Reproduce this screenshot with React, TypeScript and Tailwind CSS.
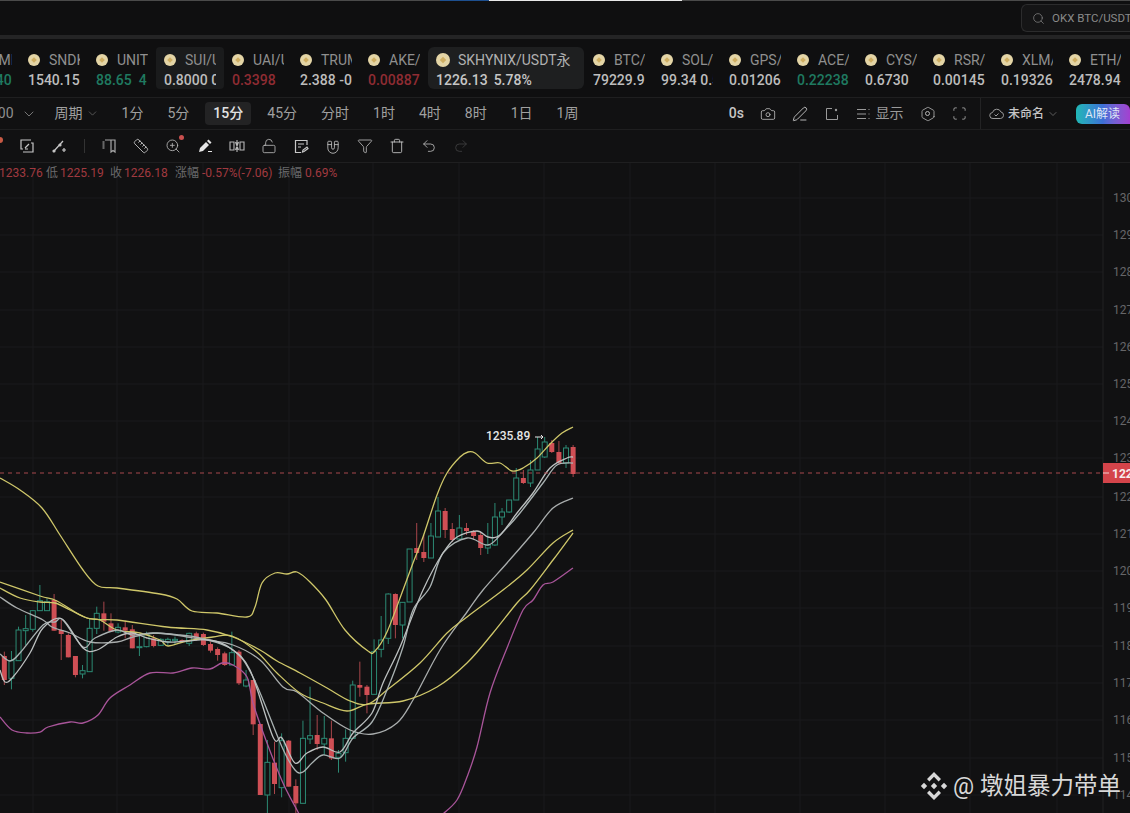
import React from "react";
import { Camera, ChevronDown, Funnel, Hexagon, LockOpen, Magnet, PenLine, Redo2, Ruler, Scan, Search, Trash, Undo2, ZoomIn } from "lucide-react";

const FONT = '[font-family:Roboto,"Noto_Sans_CJK_SC",sans-serif]';

const Coin = ({ size = 12 }: { size?: number }) => (
  <svg width={size} height={size} viewBox="0 0 12 12" className="shrink-0">
    <circle cx="6" cy="6" r="6" fill="#e4d5a6" />
    <path d="M6 3.2 8.8 6 6 8.8 3.2 6Z" fill="#cfae62" />
  </svg>
);

const tickers: { s: string; v: string; c?: string; box?: boolean }[] = [
  { s: "SNDK/USDT", v: "1540.15 3.2%" },
  { s: "UNITY/USDT", v: "88.65\u00a0\u00a04", c: "text-[#1f7a60]" },
  { s: "SUI/USDT", v: "0.8000 0.5%", box: true },
  { s: "UAI/USDT", v: "0.3398", c: "text-[#8f2c33]" },
  { s: "TRUMP/USDT", v: "2.388 -0.4%" },
  { s: "AKE/USDT", v: "0.00887", c: "text-[#8f2c33]" },
];
const tickers2: { s: string; v: string; c?: string }[] = [
  { s: "BTC/USDT", v: "79229.9" },
  { s: "SOL/USDT", v: "99.34 0.5%" },
  { s: "GPS/USDT", v: "0.01206" },
  { s: "ACE/USDT", v: "0.22238", c: "text-[#1f7a60]" },
  { s: "CYS/USDT", v: "0.6730" },
  { s: "RSR/USDT", v: "0.00145" },
  { s: "XLM/USDT", v: "0.19326" },
  { s: "ETH/USDT", v: "2478.94" },
];

const Tick = ({ s, v, c, box }: { s: string; v: string; c?: string; box?: boolean }) => (
  <div className={`w-[68px] h-[42px] shrink-0 px-2 rounded ${box ? "bg-[#1a1b1c]" : ""}`}>
    <div className="w-[52px] overflow-hidden">
      <div className="flex items-center h-[20px] mt-[3px] whitespace-nowrap">
        <Coin />
        <span className="ml-[9px] text-[14px] leading-5 text-[#8f8f8f]">{s}</span>
      </div>
      <div className={`h-[20px] text-[14px] leading-[20px] font-medium whitespace-nowrap ${c ?? "text-[#bdbdbd]"}`}>{v}</div>
    </div>
  </div>
);

const periods = ["1分", "5分", "15分", "45分", "分时", "1时", "4时", "8时", "1日", "1周"];

const IconBox = ({ children, w = "w-[32px]" }: { children: React.ReactNode; w?: string }) => (
  <div className={`${w} h-[24px] flex items-center justify-center shrink-0 text-[#b5b5b5]`}>{children}</div>
);

const s = { size: 16, strokeWidth: 1.3 };

/* z3: [wickTop, bodyTop, bodyBot, wickBot, red] in zoomed units */
const Z: [number, number, number, number, number][] = [
  [245, 258, 330, 345, 1], [243, 272, 325, 358, 0], [170, 180, 272, 272, 0], [135, 176, 182, 225, 0], [120, 122, 178, 185, 0],
  [45, 92, 122, 122, 0], [85, 95, 122, 122, 0], [72, 90, 182, 182, 1], [150, 180, 192, 270, 1], [190, 195, 262, 262, 1],
  [258, 258, 315, 322, 1], [285, 302, 312, 325, 0], [145, 175, 305, 305, 0], [110, 130, 175, 192, 0], [95, 130, 155, 182, 1],
  [130, 160, 185, 185, 1], [160, 172, 186, 190, 0], [152, 172, 182, 205, 1], [165, 178, 235, 235, 1], [195, 230, 232, 258, 0],
  [185, 192, 230, 232, 0], [195, 205, 228, 232, 1], [205, 208, 226, 228, 0], [203, 208, 215, 225, 0], [200, 208, 212, 222, 0],
  [208, 210, 216, 218, 1], [188, 190, 220, 228, 0], [185, 190, 205, 212, 1], [188, 192, 225, 228, 1], [215, 222, 242, 248, 1],
  [232, 237, 255, 272, 1], [245, 250, 285, 288, 1], [185, 248, 285, 285, 0], [240, 245, 340, 345, 1], [300, 330, 348, 352, 0],
  [330, 330, 463, 495, 1], [462, 462, 675, 675, 1], [510, 577, 675, 729, 0], [515, 578, 642, 672, 1], [490, 512, 653, 682, 0],
  [510, 512, 650, 650, 1], [628, 648, 700, 729, 1], [452, 505, 700, 700, 0], [350, 497, 507, 522, 0], [435, 495, 522, 540, 1],
  [438, 505, 522, 555, 0], [452, 505, 565, 570, 1], [540, 550, 562, 608, 0], [478, 505, 548, 575, 0], [332, 345, 505, 505, 0],
  [275, 345, 353, 380, 1], [345, 350, 375, 430, 1], [208, 245, 373, 373, 0], [138, 210, 238, 262, 0], [70, 72, 205, 222, 0],
  [70, 72, 165, 205, 1], [97, 97, 165, 205, 0],
];
const R: [number, number, number, number, number][] = [
  [549, 549, 602, 602, 0], [523, 548, 553, 560, 1], [535, 552, 558, 562, 1], [523, 536, 558, 558, 0], [497, 511, 537, 537, 0],
  [508, 511, 530, 538, 1], [523, 529, 540, 542, 1], [515, 528, 539, 540, 0], [523, 528, 531, 535, 1], [530, 532, 536, 540, 1],
  [532, 535, 548, 555, 1], [523, 545, 548, 554, 0], [503, 517, 545, 546, 0], [508, 512, 517, 525, 0], [500, 500, 512, 513, 0],
  [468, 478, 500, 500, 0], [470, 478, 483, 484, 1], [460, 470, 483, 487, 0], [437, 449, 470, 470, 0], [437, 442, 457, 458, 0],
  [440, 443, 452, 453, 1], [441, 452, 463, 465, 1], [445, 448, 463, 468, 0], [445, 447, 474, 477, 1],
];
const candles = [
  ...Z.map((c) => [570 + c[0] / 3, 570 + c[1] / 3, 570 + c[2] / 3, 570 + c[3] / 3, c[4]]),
  ...R,
];

/* smooth curve through the sampled points */
const curve = (a: number[][]) => {
  let d = `M${a[0][0]} ${a[0][1]}`;
  for (let i = 0; i < a.length - 1; i++) {
    const p0 = a[Math.max(0, i - 1)];
    const p1 = a[i];
    const p2 = a[i + 1];
    const p3 = a[Math.min(a.length - 1, i + 2)];
    const c1x = p1[0] + (p2[0] - p0[0]) / 6;
    const c1y = p1[1] + (p2[1] - p0[1]) / 6;
    const c2x = p2[0] - (p3[0] - p1[0]) / 6;
    const c2y = p2[1] - (p3[1] - p1[1]) / 6;
    d += ` C${c1x.toFixed(1)} ${c1y.toFixed(1)} ${c2x.toFixed(1)} ${c2y.toFixed(1)} ${p2[0]} ${p2[1]}`;
  }
  return d;
};

const upper = [[0,478],[20,490],[42,508],[60,535],[83,570],[98,586],[117,588],[160,594],[177,599],[192,611],[217,613],[247,617],[255,607],[262,583],[275,573],[287,574],[297,572],[310,582],[326,600],[345,630],[368,651],[375,651],[387,632],[403,590],[413,563],[423,537],[437,495],[447,473],[460,457],[468,452],[475,453],[487,463],[500,463],[512,471],[523,468],[537,458],[550,444],[562,433],[573,427]];
const y1 = [[0,582],[40,596],[57,601],[87,618],[117,620],[167,627],[207,630],[233,637],[260,650],[277,661],[300,673],[327,688],[350,701],[368,704],[387,690],[420,663],[447,633],[467,617],[503,590],[527,570],[553,543],[573,530]];
const y2 = [[0,588],[20,598],[40,602],[55,603],[70,610],[87,618],[100,620],[117,630],[140,633],[160,640],[168,646],[187,641],[213,637],[232,636],[257,652],[277,673],[300,693],[323,703],[347,711],[368,704],[403,701],[437,687],[467,663],[493,633],[517,603],[530,590],[553,560],[573,533]];
const slow = [[0,597],[17,608],[43,620],[52,627],[70,633],[90,642],[117,642],[133,637],[157,633],[187,637],[207,640],[233,645],[260,660],[283,687],[297,692],[323,713],[350,730],[373,734],[397,723],[413,700],[440,650],[467,612],[483,590],[507,563],[533,533],[553,508],[573,498]];
const f1 = [[0,670],[5,682],[13,677],[30,653],[43,628],[62,619],[83,648],[97,650],[117,637],[132,633],[147,638],[167,642],[187,641],[210,640],[230,648],[250,670],[273,737],[282,738],[295,763],[307,753],[323,747],[340,752],[353,733],[372,713],[383,683],[400,647],[423,590],[443,553],[457,537],[477,531],[488,537],[500,535],[517,513],[533,493],[550,468],[567,458],[573,457]];
const f2 = [[0,654],[10,661],[20,653],[43,625],[55,622],[63,620],[83,647],[95,638],[117,630],[132,635],[153,633],[180,635],[200,638],[233,650],[253,677],[282,747],[295,770],[303,772],[312,763],[323,755],[340,758],[353,738],[372,722],[387,690],[403,647],[413,610],[430,587],[443,553],[467,538],[488,545],[503,532],[520,513],[543,483],[557,465],[573,463]];
const pink = [[0,717],[12,730],[27,733],[40,732],[48,727],[70,722],[83,723],[98,715],[110,698],[130,685],[150,673],[173,673],[192,668],[210,669],[222,663],[233,665],[247,677],[253,703],[267,743],[283,783],[297,810],[299,814]];
const pink2 = [[443,814],[457,800],[467,777],[477,747],[490,693],[507,648],[523,610],[533,600],[543,585],[553,582],[573,568]];

const axis = [["1300",198],["1290",235],["1280",272],["1270",310],["1260",347],["1250",384],["1240",421],["1230",458],["1220",497],["1210",534],["1200",571],["1190",608],["1180",646],["1170",683],["1160",720],["1150",758],["1140",795]] as [string, number][];
const vgrid = [33, 117, 203, 289, 373, 459, 544, 630, 715, 800, 885, 970, 1057];

const Chart = () => (
  <svg width="1130" height="650" viewBox="0 163 1130 650" className="block">
    {axis.map(([, y]) => <line key={y} x1="0" x2="1103" y1={y} y2={y} stroke="#1b1b1c" />)}
    {vgrid.map((x) => <line key={x} x1={x} x2={x} y1="163" y2="813" stroke="#1b1b1c" />)}
    <line x1="1103" x2="1103" y1="163" y2="813" stroke="#222223" />
    {candles.map((c, i) => {
      const x = 4.33 + 7.11 * i;
      const col = c[4] ? "#cf4f55" : "#2c8a74";
      return (
        <g key={i}>
          <line x1={x} x2={x} y1={c[0]} y2={c[3]} stroke={c[4] ? "#a8464b" : "#2c8a74"} />
          <rect x={x - 2.5} y={c[1]} width="5" height={Math.max(1, c[2] - c[1])} fill={c[4] ? col : "#111112"} stroke={c[4] ? "none" : col} />
        </g>
      );
    })}
    <g fill="none" strokeWidth="1.3" strokeLinejoin="round">
      <path d={curve(pink)} stroke="#a9559a" />
      <path d={curve(pink2)} stroke="#a9559a" />
      <path d={curve(slow)} stroke="#a9adad" />
      <path d={curve(y2)} stroke="#cfc76a" />
      <path d={curve(y1)} stroke="#cfc76a" />
      <path d={curve(upper)} stroke="#cfc76a" />
      <path d={curve(f2)} stroke="#a9b2b2" />
      <path d={curve(f1)} stroke="#bcc0c0" />
    </g>
    <line x1="0" x2="1103" y1="473" y2="473" stroke="#a8484c" strokeDasharray="4 4" />
    {axis.map(([t, y]) => (
      <text key={t} x="1113" y={y + 4} fontSize="12" fill="#666668">{t}</text>
    ))}
    <rect x="1103" y="463" width="27" height="20" fill="#d4444a" />
    <line x1="1103" x2="1109" y1="473" y2="473" stroke="#f3d0d0" />
    <text x="1112" y="478" fontSize="12" fontWeight="700" fill="#f7eded">1226</text>
    <text x="486" y="440" fontSize="12" fontWeight="500" fill="#e6e6e6">1235.89</text>
    <path d="M535 437h8M541 435l2 2-2 2" fill="none" stroke="#e6e6e6" />
  </svg>
);

const Logo = () => (
  <svg width="28" height="28" viewBox="0 0 28 28" fill="#d8d8d8" className="shrink-0">
    <path d="M14 0 21 7 18.6 9.4 14 4.8 9.4 9.4 7 7Z" />
    <path d="M14 28 7 21 9.4 18.6 14 23.2 18.6 18.6 21 21Z" />
    <path d="M4 10.8 7.2 14 4 17.2 .8 14Z" />
    <path d="M24 10.8 27.2 14 24 17.2 20.8 14Z" />
    <path d="M14 10.8 17.2 14 14 17.2 10.8 14Z" />
  </svg>
);

export default function App() {
  return (
    <div className={`w-[1130px] h-[813px] overflow-hidden bg-[#111112] text-[#bdbdbd] flex flex-col ${FONT}`}>
      {/* top edge */}
      <div className="flex h-[1px] bg-[#4a4a4a] shrink-0">
        <div className="ml-[440px] w-[49px] bg-[#1d4f8f]" />
        <div className="w-[193px] bg-[#e8e8e8]" />
      </div>
      {/* header */}
      <div className="h-[34px] shrink-0 flex justify-end bg-[#0f0f10] overflow-hidden">
        <div className="w-[109px] h-[28px] mt-[3px] pl-[9px] flex items-center gap-[7px] border border-[#2c2c2d] border-r-0 rounded-l-md bg-[#151516] whitespace-nowrap overflow-hidden">
          <Search size={13} strokeWidth={1.3} className="shrink-0 ml-[1px] text-[#8a8a8a]" />
          <span className="text-[11.500px] mt-[1px] text-[#8a8a8a]">OKX BTC/USDT</span>
        </div>
      </div>
      <div className="h-[4px] shrink-0 bg-[#242425]" />
      {/* tickers */}
      <div className="h-[59px] shrink-0 border-b border-[#1f1f20] overflow-hidden bg-[#0f0f10]">
        <div className="flex items-start pt-[8px] ml-[-48px] w-[1300px]">
          <Tick s="ZAMM/USDT" v="1062.40" c="text-[#1f7a60]" />
          {tickers.map((t) => <Tick key={t.s} {...t} />)}
          <div className="w-[156px] h-[42px] shrink-0 px-2 rounded-md bg-[#1e1f20]">
            <div className="flex items-center h-[20px] mt-[3px] whitespace-nowrap">
              <Coin size={14} />
              <span className="ml-[8px] text-[14px] leading-5 text-[#b0b0b0]">SKHYNIX/USDT永</span>
            </div>
            <div className="h-[20px] text-[14px] leading-[20px] font-medium whitespace-nowrap text-[#c6c6c6]">
              1226.13<span className="ml-[6px]">5.78%</span>
            </div>
          </div>
          <div className="flex ml-[1px]">
            {tickers2.map((t) => <Tick key={t.s} {...t} />)}
          </div>
        </div>
      </div>
      {/* period toolbar */}
      <div className="h-[32px] shrink-0 flex items-center border-b border-[#1f1f20] text-[14px] whitespace-nowrap">
        <span className="ml-[-10px] text-[#8f8f8f]">000</span>
        <ChevronDown size={16} strokeWidth={1.2} className="ml-[7px] text-[#8f8f8f]" />
        <span className="ml-[18px] text-[#a0a0a0]">周期</span>
        <ChevronDown size={13} strokeWidth={1.2} className="ml-[3px] text-[#777]" />
        <div className="ml-[15px] flex gap-2">
          {periods.map((p) => (
            <div key={p} className={`h-[23px] px-2 flex items-center rounded ${p === "15分" ? "bg-[#232324] font-medium text-[#e2e2e2]" : "text-[#a0a0a0]"}`}>{p}</div>
          ))}
        </div>
        <div className="ml-auto flex items-center">
          <span className="font-medium text-[#c6c6c6] mr-[8px]">0s</span>
          <IconBox><Camera {...s} /></IconBox>
          <IconBox><PenLine size={16} strokeWidth={1.3} className="text-[#d0d0d0]" /></IconBox>
          <IconBox>
            <svg width="14" height="14" viewBox="0 0 14 14" fill="none" stroke="#9a9a9a" strokeWidth="1"><path d="M7 1.5H1.5v11h11V8" /><circle cx="11" cy="3" r="1.2" fill="#9a9a9a" stroke="none" /></svg>
          </IconBox>
          <div className="w-[64px] h-[24px] flex items-center justify-center gap-[5px] text-[#9a9a9a]">
            <svg width="14" height="12" viewBox="0 0 14 12" fill="none" stroke="currentColor"><path d="M1 1.5h9M1 6h9M1 10.5h9M12.5 1.5h1M12.5 6h1M12.5 10.5h1" /></svg>
            <span>显示</span>
          </div>
          <IconBox>
            <span className="relative flex items-center justify-center">
              <Hexagon size={16} strokeWidth={1.2} />
              <span className="absolute w-[5px] h-[5px] rounded-full border border-[#b5b5b5]" />
            </span>
          </IconBox>
          <IconBox><Scan size={15} strokeWidth={1.3} /></IconBox>
          <div className="ml-[4px] h-[31px] w-[1px] bg-[#232324]" />
          <svg width="15" height="13" viewBox="0 0 15 13" fill="none" stroke="#9a9a9a" strokeWidth="1" className="ml-[8px]">
            <path d="M4 11.500a3 3 0 0 1-.5-6A4.500 4.500 0 0 1 12 5a3.300 3.300 0 0 1-.5 6.500Z" />
            <path d="M5.500 7.500 7 9l2.500-2.500" />
          </svg>
          <span className="ml-[4px] text-[12px] font-medium text-[#c6c6c6]">未命名</span>
          <ChevronDown size={12} strokeWidth={1.2} className="ml-[3px] text-[#8f8f8f]" />
          <div className="ml-[17px] w-[54px] h-[20px] flex items-center pl-[9px] rounded-l-md rounded-tr-md bg-gradient-to-r from-[#20b7b5] via-[#3d6fd6] to-[#a33fd0] text-[12px] text-[#dfe6f5]">AI解读</div>
        </div>
      </div>
      {/* drawing toolbar */}
      <div className="h-[33px] shrink-0 flex items-center border-b border-[#1f1f20] text-[#b5b5b5]">
        <div className="w-[11px] relative h-[24px]">
          <span className="absolute left-[-3px] top-[3px] w-[6px] h-[6px] rounded-full bg-[#c85a45]" />
        </div>
        <IconBox>
          <svg width="16" height="16" viewBox="0 0 16 16" fill="none" stroke="#c8c8c8" strokeWidth="1.2"><path d="M12 2H2v9h2M4 14h10V5h-2" /><path d="M6 10l4-4M6 11h3" /></svg>
        </IconBox>
        <IconBox>
          <svg width="16" height="16" viewBox="0 0 16 16" fill="none" stroke="#c8c8c8" strokeWidth="1.2"><path d="M3 13 12 3" /><circle cx="3" cy="13" r="1" fill="#c8c8c8" /><circle cx="9" cy="7" r="1" fill="#c8c8c8" /><path d="M11 12h4M13 10v4" /></svg>
        </IconBox>
        <div className="w-[1px] h-[14px] ml-[9px] mr-[8px] bg-[#333]" />
        <IconBox>
          <svg width="15" height="16" viewBox="0 0 15 16" fill="none" stroke="#a8a8a8" strokeWidth="1.2"><path d="M3 2h10v12l-2-1.500-2 1.500V2" /><path d="M1.500 3v8" stroke="#666" strokeWidth="2" /></svg>
        </IconBox>
        <IconBox><Ruler {...s} className="text-[#c8c8c8]" /></IconBox>
        <IconBox>
          <span className="relative flex">
            <ZoomIn size={16} strokeWidth={1.3} />
            <span className="absolute right-[-3px] top-[-3px] w-[5px] h-[5px] rounded-full bg-[#c9504f]" />
          </span>
        </IconBox>
        <IconBox>
          <svg width="16" height="16" viewBox="0 0 16 16" fill="#e6e6e6"><path d="M2 14l1-4 6-6 3 3-6 6Z" /><path d="M10 3l1.500-1.500 3 3L13 6Z" /><path d="M11 13h4v1h-4z" /></svg>
        </IconBox>
        <IconBox>
          <svg width="16" height="14" viewBox="0 0 16 14" fill="none" stroke="#b8b8b8" strokeWidth="1.1"><path d="M1 3h4v8H1zM11 3h4v8h-4zM6.500 3l3 8M9.500 3l-3 8M8 1v12" /></svg>
        </IconBox>
        <IconBox><LockOpen {...s} /></IconBox>
        <IconBox>
          <svg width="15" height="15" viewBox="0 0 15 15" fill="none" stroke="#c8c8c8" strokeWidth="1.2"><path d="M13 6V1.500H1.500v12H7" /><path d="M4 5h6M4 8h3" /><path d="M8.500 13l.5-2 4-3 1 1.500-4 3Z" /></svg>
        </IconBox>
        <IconBox><Magnet size={16} strokeWidth={1.3} className="rotate-[135deg]" /></IconBox>
        <IconBox><Funnel {...s} /></IconBox>
        <IconBox><Trash {...s} className="text-[#c8c8c8]" /></IconBox>
        <IconBox><Undo2 {...s} /></IconBox>
        <IconBox><Redo2 size={16} strokeWidth={1.3} className="text-[#3f3f40]" /></IconBox>
      </div>
      {/* chart */}
      <div className="relative flex-1 overflow-hidden">
        <Chart />
        <div className="absolute left-[-1px] top-[2px] h-[15px] mt-[1px] flex items-center text-[12px] leading-[15px] whitespace-nowrap text-[#6a6a6c]">
          <span className="text-[#a13a40] w-[47px]">1233.76</span>
          <span className="w-[14px]">低</span>
          <span className="text-[#a13a40] w-[50px]">1225.19</span>
          <span className="w-[14px]">收</span>
          <span className="text-[#a13a40] w-[51px]">1226.18</span>
          <span className="w-[27px]">涨幅</span>
          <span className="text-[#a13a40] w-[76px]">-0.57%(-7.06)</span>
          <span className="w-[27px]">振幅</span>
          <span className="text-[#a13a40]">0.69%</span>
        </div>
        <div className="absolute left-[920px] top-[608px] flex items-center gap-[5px] whitespace-nowrap text-[#d8d8d8]">
          <Logo />
          <span className="text-[23.500px] leading-[30px]">@ 墩姐暴力带单</span>
        </div>
      </div>
    </div>
  );
}
